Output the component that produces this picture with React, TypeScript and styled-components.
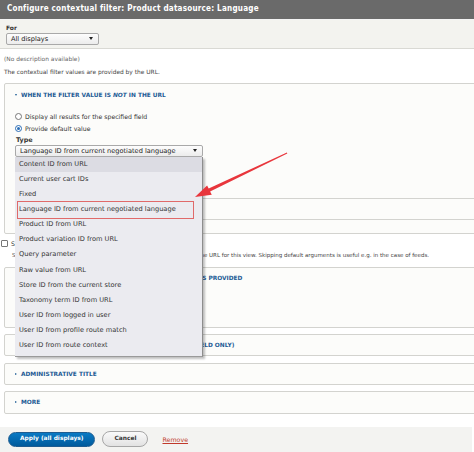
import React from "react";
import styled, { createGlobalStyle } from "styled-components";

const Global = createGlobalStyle`
  html, body { margin: 0; padding: 0; background: #fff; }
  body {
    width: 474px; height: 452px; overflow: hidden;
    font-family: "DejaVu Sans", "Noto Sans", sans-serif;
    color: #333;
  }
  * { box-sizing: border-box; }
`;

const Page = styled.div`
  position: relative;
  width: 474px;
  height: 452px;
  overflow: hidden;
  display: flex;
  flex-direction: column;
`;

const TitleBar = styled.div`
  height: 21px;
  background: #6a6a6a;
  border-bottom: 1px solid #f4f4f4;
  color: #fff;
  font-family: "DejaVu Sans Condensed", "DejaVu Sans", sans-serif;
  font-weight: bold;
  font-size: 8.05px;
  letter-spacing: 0.22px;
  line-height: 18px;
  padding-left: 7px;
  white-space: nowrap;
`;

const ForSection = styled.div`
  height: 31px;
  background: #f3f3ef;
  border-bottom: 1px solid #d9d9d4;
  padding: 4px 6px 0;
  display: flex;
  flex-direction: column;
  gap: 2px;
`;

const Label = styled.div`
  font-weight: bold;
  font-size: 6px;
  line-height: 7px;
  color: #333;
`;

const SelectBox = styled.div<{ $w: number }>`
  width: ${(p) => p.$w}px;
  height: 12px;
  border: 1px solid #a9a9a9;
  border-radius: 2px;
  background: linear-gradient(#fdfdfd, #ececec);
  display: flex;
  align-items: center;
  justify-content: space-between;
  padding: 0 5px 0 4px;
  font-size: 6.6px;
  color: #222;
  white-space: nowrap;
`;

const Caret = styled.span`
  width: 0;
  height: 0;
  border-left: 2px solid transparent;
  border-right: 2px solid transparent;
  border-top: 3px solid #222;
`;

const Descriptions = styled.div`
  padding: 7px 4px 6px;
  display: flex;
  flex-direction: column;
  gap: 6px;
  height: 35px;
`;

const Desc = styled.div<{ $muted?: boolean }>`
  font-size: 5.9px;
  line-height: 7px;
  color: ${(p) => (p.$muted ? "#666" : "#444")};
  white-space: nowrap;
`;

const Fieldset = styled.div<{ $h?: number }>`
  margin-left: 4px;
  width: 476px;
  border: 1px solid #d3d3cf;
  border-radius: 2px;
  background: #fcfcfa;
  ${(p) => (p.$h ? `height: ${p.$h}px;` : "")}
`;

const Legend = styled.div<{ $h: number }>`
  height: ${(p) => p.$h}px;
  display: flex;
  align-items: center;
  gap: 4px;
  padding-left: 10px;
  font-weight: bold;
  font-size: 5.85px;
  color: #1c5b95;
  text-transform: uppercase;
  white-space: nowrap;
  em { font-style: italic; }
`;

const Tri = styled.span<{ $open?: boolean }>`
  width: 0;
  height: 0;
  ${(p) =>
    p.$open
      ? `border-left: 1.7px solid transparent; border-right: 1.7px solid transparent; border-top: 2.6px solid #1c5b95;`
      : `border-top: 1.7px solid transparent; border-bottom: 1.7px solid transparent; border-left: 2.6px solid #1c5b95;`}
`;

const FieldBody = styled.div`
  padding: 4px 0 13px 10px;
  display: flex;
  flex-direction: column;
`;

const RadioRow = styled.label`
  height: 12px;
  display: flex;
  align-items: center;
  gap: 3px;
  font-size: 6.2px;
  color: #333;
  white-space: nowrap;
`;

const Radio = styled.span<{ $checked?: boolean }>`
  width: 7px;
  height: 7px;
  border-radius: 50%;
  border: 1px solid ${(p) => (p.$checked ? "#2a6db5" : "#777")};
  background: #fff;
  display: flex;
  align-items: center;
  justify-content: center;
  &::after {
    content: "";
    width: 3px;
    height: 3px;
    border-radius: 50%;
    background: ${(p) => (p.$checked ? "#2a6db5" : "transparent")};
  }
`;

const TypeLabel = styled(Label)`
  margin-top: 2px;
  padding-left: 1px;
  font-size: 6.4px;
`;

const SelectWrap = styled.div`
  position: relative;
  margin-top: 1px;
`;

const DropList = styled.ul`
  position: absolute;
  left: 0;
  top: 12px;
  width: 188px;
  margin: 0;
  padding: 0 0 3px;
  list-style: none;
  background: #ebebf0;
  border-right: 1px solid #8d8d8d;
  border-bottom: 1px solid #9a9a9a;
  box-shadow: 2px 2px 2px rgba(0, 0, 0, 0.25);
  z-index: 5;
`;

const DropItem = styled.li<{ $active?: boolean; $marked?: boolean }>`
  position: relative;
  height: 15.15px;
  line-height: 15.15px;
  padding-left: 4px;
  font-size: 6.65px;
  color: #333;
  white-space: nowrap;
  background: ${(p) => (p.$active ? "#dcdce3" : "transparent")};
  ${(p) =>
    p.$marked
      ? `&::after { content: ""; position: absolute; left: 2px; right: 8px; top: -1px; bottom: -2px; border: 1px solid #e06a6a; }`
      : ""}
`;

const InnerBox = styled.div`
  margin-top: 41px;
  height: 22px;
  border: 1px solid #d3d3cf;
  border-radius: 2px;
`;

const SkipSection = styled.div`
  height: 35px;
  padding: 6px 0 0 1px;
  display: flex;
  flex-direction: column;
  gap: 5px;
`;

const CheckRow = styled.label`
  display: flex;
  align-items: center;
  gap: 3px;
  font-size: 6.2px;
  line-height: 7px;
  color: #333;
  white-space: nowrap;
`;

const Check = styled.span`
  width: 7px;
  height: 7px;
  border: 1px solid #777;
  border-radius: 1px;
  background: #fff;
`;

const SkipDesc = styled(Desc)`
  padding-left: 11px;
  font-size: 5.5px;
`;

const Stack = styled.div`
  display: flex;
  flex-direction: column;
  gap: 6px;
`;

const Spacer = styled.div<{ $h: number }>`
  height: ${(p) => p.$h}px;
  flex: none;
`;

const ButtonBar = styled.div`
  margin-top: 13px;
  width: 472px;
  height: 27px;
  background: #f3f3f1;
  display: flex;
  align-items: center;
  gap: 7px;
  padding: 0 0 0 8px;
`;

const Button = styled.button<{ $primary?: boolean }>`
  height: ${(p) => (p.$primary ? 15 : 16)}px;
  padding: 0 11px;
  border-radius: 9px;
  font-family: "DejaVu Sans", sans-serif;
  font-weight: bold;
  font-size: 5.9px;
  line-height: 1;
  cursor: pointer;
  border: 1px solid ${(p) => (p.$primary ? "#1e5c90" : "#a6a6a6")};
  background: ${(p) =>
    p.$primary ? "linear-gradient(#0a7ac4, #005a9c)" : "linear-gradient(#fafafa, #e2e2e2)"};
  color: ${(p) => (p.$primary ? "#fff" : "#333")};
`;

const RemoveLink = styled.a`
  margin-left: 7px;
  font-size: 6.3px;
  color: #c0392b;
  text-decoration: underline;
`;

const ArrowSvg = styled.svg`
  position: absolute;
  left: 0;
  top: 0;
  pointer-events: none;
  z-index: 10;
`;

const options = [
  "Content ID from URL",
  "Current user cart IDs",
  "Fixed",
  "Language ID from current negotiated language",
  "Product ID from URL",
  "Product variation ID from URL",
  "Query parameter",
  "Raw value from URL",
  "Store ID from the current store",
  "Taxonomy term ID from URL",
  "User ID from logged in user",
  "User ID from profile route match",
  "User ID from route context",
];

export default function App() {
  return (
    <Page>
      <Global />
      <TitleBar>Configure contextual filter: Product datasource: Language</TitleBar>
      <ForSection>
        <Label>For</Label>
        <SelectBox $w={93}>
          <span>All displays</span>
          <Caret />
        </SelectBox>
      </ForSection>
      <Descriptions>
        <Desc $muted>(No description available)</Desc>
        <Desc>The contextual filter values are provided by the URL.</Desc>
      </Descriptions>
      <Fieldset>
        <Legend $h={23}>
          <Tri $open />
          <span>
            When the filter value is <em>not</em> in the URL
          </span>
        </Legend>
        <FieldBody>
          <RadioRow>
            <Radio />
            Display all results for the specified field
          </RadioRow>
          <RadioRow>
            <Radio $checked />
            Provide default value
          </RadioRow>
          <TypeLabel>Type</TypeLabel>
          <SelectWrap>
            <SelectBox $w={188}>
              <span>Language ID from current negotiated language</span>
              <Caret />
            </SelectBox>
            <DropList>
              {options.map((o, i) => (
                <DropItem key={o} $active={i === 0} $marked={i === 3}>
                  {o}
                </DropItem>
              ))}
            </DropList>
          </SelectWrap>
          <InnerBox />
        </FieldBody>
      </Fieldset>
      <SkipSection>
        <CheckRow>
          <Check />
          Skip default argument for view URL
        </CheckRow>
        <SkipDesc>
          Select whether to include this default argument when constructing the URL for this view. Skipping default arguments is useful e.g. in the case of feeds.
        </SkipDesc>
      </SkipSection>
      <Stack>
        <Fieldset $h={61}>
          <Legend $h={20}>
            <Tri $open />
            <span>When the filter value IS in the URL or a default is provided</span>
          </Legend>
        </Fieldset>
        <Fieldset $h={22}>
          <Legend $h={20}>
            <Tri />
            <span>Exceptions (this setting affects this specific field only)</span>
          </Legend>
        </Fieldset>
      </Stack>
      <Spacer $h={7} />
      <Stack>
        <Fieldset $h={22}>
          <Legend $h={20}>
            <Tri />
            <span>Administrative title</span>
          </Legend>
        </Fieldset>
        <Fieldset $h={23}>
          <Legend $h={21}>
            <Tri />
            <span>More</span>
          </Legend>
        </Fieldset>
      </Stack>
      <ButtonBar>
        <Button $primary>Apply (all displays)</Button>
        <Button>Cancel</Button>
        <RemoveLink href="#">Remove</RemoveLink>
      </ButtonBar>
      <ArrowSvg width="474" height="452" viewBox="0 0 474 452">
        <polygon
          points="287.3,153.4 210.1,191.6 211.8,194.8 195,197 207.1,185.4 208.7,188.6 286.9,152.6"
          fill="#e8363c"
        />
      </ArrowSvg>
    </Page>
  );
}
